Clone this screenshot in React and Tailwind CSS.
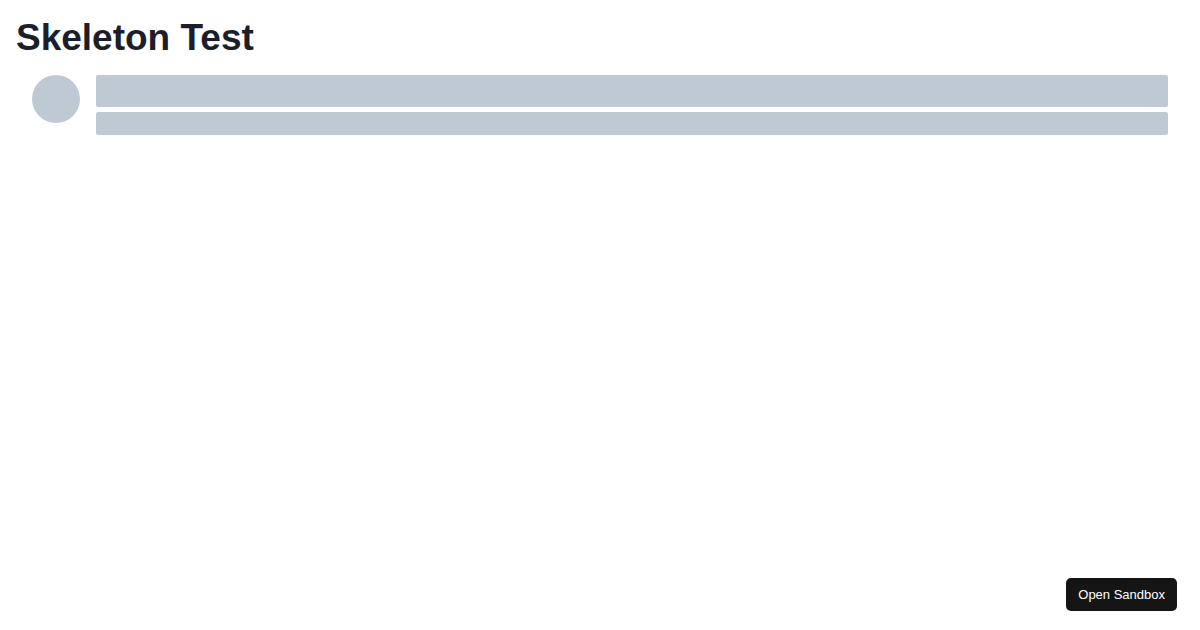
export default function App() {
  return (
    <div className="min-h-screen bg-white p-4 font-['Liberation_Sans',Arial,sans-serif]">
      <h1 className="text-[37px] font-bold leading-[44px] text-[#1c1f2b]">Skeleton Test</h1>

      {/* Skeleton row */}
      <div className="mt-[15px] flex gap-4 px-4">
        <div className="h-12 w-12 shrink-0 rounded-full bg-[#bfc9d4]" />
        <div className="flex-1">
          <div className="h-8 rounded-[2px] bg-[#bfc9d4]" />
          <div className="mt-[5px] h-[23px] rounded-[2px] bg-[#bfc9d4]" />
        </div>
      </div>

      <button className="fixed bottom-[19px] right-[23px] rounded-[5px] bg-[#151515] px-3 py-[8px] text-[13px] leading-[17px] text-white">
        Open Sandbox
      </button>
    </div>
  );
}
